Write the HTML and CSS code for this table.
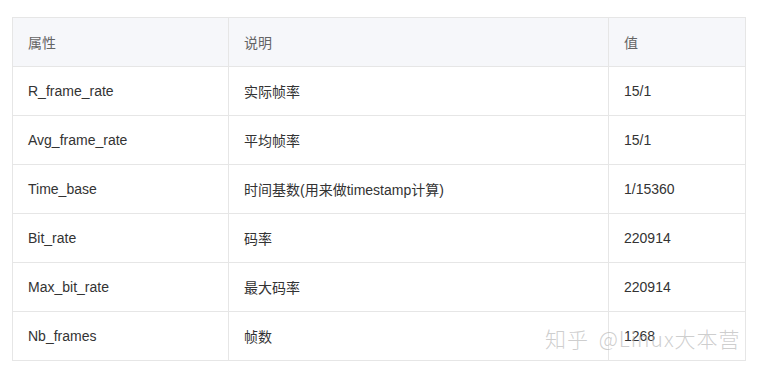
FILE: index.html
```html
<!DOCTYPE html>
<html lang="zh">
<head>
<meta charset="utf-8">
<link rel="stylesheet" href="styles.css">
</head>
<body>
<div class="wrap">
<table class="tbl">
<colgroup><col class="c1"><col class="c2"><col class="c3"></colgroup>
<thead>
<tr><th>属性</th><th>说明</th><th>值</th></tr>
</thead>
<tbody>
<tr><td>R_frame_rate</td><td>实际帧率</td><td>15/1</td></tr>
<tr><td>Avg_frame_rate</td><td>平均帧率</td><td>15/1</td></tr>
<tr><td>Time_base</td><td>时间基数(用来做timestamp计算)</td><td>1/15360</td></tr>
<tr><td>Bit_rate</td><td>码率</td><td>220914</td></tr>
<tr><td>Max_bit_rate</td><td>最大码率</td><td>220914</td></tr>
<tr><td>Nb_frames</td><td>帧数</td><td>1268</td></tr>
</tbody>
</table>
<div class="mark">知乎 @Linux大本营</div>
</div>
</body>
</html>
```
FILE: styles.css
```css
html, body { margin: 0; padding: 0; background: #fff; }
.wrap { position: relative; width: 761px; height: 370px; padding: 17px 0 0 12px; box-sizing: border-box; }
.tbl { border-collapse: collapse; width: 733px; table-layout: fixed;
  font-family: "Liberation Sans", Arial, "Noto Sans CJK SC", sans-serif; font-size: 14px; }
.c1 { width: 216px; } .c2 { width: 380px; } .c3 { width: 137px; }
.tbl th, .tbl td { border: 1px solid #e6e6e6; height: 49px; padding: 0 0 0 15px; text-align: left; vertical-align: middle; box-sizing: border-box; }
.tbl th { background: #f6f7fa; color: #646464; font-weight: normal; }
.tbl td { color: #333; }
.mark { position: absolute; left: 545px; top: 324px; font-family: "Noto Sans CJK SC", sans-serif; font-weight: 300; font-size: 21px; line-height: 28px; color: rgba(185,185,185,0.7); letter-spacing: 1px; word-spacing: 4px; white-space: nowrap; }
```
